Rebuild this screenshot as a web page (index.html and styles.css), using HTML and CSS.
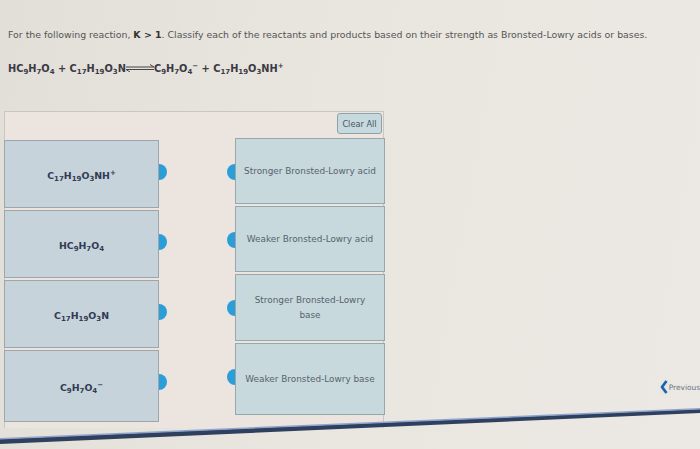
FILE: index.html
```html
<!DOCTYPE html>
<html>
<head>
<meta charset="utf-8">
<link rel="stylesheet" href="styles.css">
</head>
<body>
<div class="page">
  <p class="question">For the following reaction, <b>K &gt; 1</b>. Classify each of the reactants and products based on their strength as Bronsted-Lowry acids or bases.</p>
  <p class="equation">HC<sub>9</sub>H<sub>7</sub>O<sub>4</sub> + C<sub>17</sub>H<sub>19</sub>O<sub>3</sub>N<svg class="eq-arrow" width="30" height="8" viewBox="0 0 30 8"><path d="M1 3 H29 L25 0.5" fill="none" stroke="#444" stroke-width="1"/><path d="M29 5.5 H1 L5 8" fill="none" stroke="#444" stroke-width="1"/></svg>C<sub>9</sub>H<sub>7</sub>O<sub>4</sub><sup>&#8722;</sup> + C<sub>17</sub>H<sub>19</sub>O<sub>3</sub>NH<sup>+</sup></p>
  <div class="work">
    <div class="panel">
      <div class="toolbar"><button class="clear">Clear All</button></div>
      <div class="board">
        <div class="col left">
          <div class="item"><span>C<sub>17</sub>H<sub>19</sub>O<sub>3</sub>NH<sup>+</sup></span></div>
          <div class="item"><span>HC<sub>9</sub>H<sub>7</sub>O<sub>4</sub></span></div>
          <div class="item"><span>C<sub>17</sub>H<sub>19</sub>O<sub>3</sub>N</span></div>
          <div class="item"><span>C<sub>9</sub>H<sub>7</sub>O<sub>4</sub><sup>&#8722;</sup></span></div>
        </div>
        <div class="col right">
          <div class="target"><span>Stronger Bronsted-Lowry acid</span></div>
          <div class="target"><span>Weaker Bronsted-Lowry acid</span></div>
          <div class="target"><span>Stronger Bronsted-Lowry<br>base</span></div>
          <div class="target"><span>Weaker Bronsted-Lowry base</span></div>
        </div>
      </div>
    </div>
    <div class="nav">
      <a class="prev"><svg width="8" height="14" viewBox="0 0 8 14"><path d="M6.5 1 L2 7 L6.5 13" fill="none" stroke="#1f5fa8" stroke-width="2.6" stroke-linejoin="round"/></svg>Previous</a>
    </div>
  </div>
  <svg class="divider" width="700" height="40" viewBox="0 0 700 40"><polygon points="0,31 700,1 700,5 0,36" fill="#2f405f"/><polygon points="0,30 700,0 700,1.5 0,31.5" fill="#8ea4cc"/></svg>
</div>
</body>
</html>
```
FILE: styles.css
```css
html, body {
  margin: 0;
  padding: 0;
}
body {
  width: 700px;
  height: 449px;
  overflow: hidden;
  background: linear-gradient(100deg, #e2ded8 0%, #e9e5df 45%, #ece9e4 100%);
  font-family: "DejaVu Sans", Verdana, sans-serif;
}
.page {
  position: relative;
  height: 449px;
}
.question {
  margin: 0;
  padding: 29px 0 0 8px;
  font-size: 9.4px;
  line-height: 12px;
  color: #555;
  white-space: nowrap;
}
.question b {
  color: #333;
}
.equation {
  margin: 21px 0 0 8px;
  font-size: 9.8px;
  line-height: 14px;
  font-weight: bold;
  color: #3a3a44;
  white-space: nowrap;
}
sub {
  font-size: 7px;
  vertical-align: -2px;
  line-height: 0;
}
sup {
  font-size: 7px;
  vertical-align: 4px;
  line-height: 0;
}
.eq-arrow {
  vertical-align: 0px;
  margin: 0 -1px;
}
.work {
  display: flex;
  margin-top: 35px;
}
.panel {
  margin-left: 4px;
  width: 378px;
  height: 316px;
  border: 1px solid #cbc6c3;
  border-bottom: none;
  background: #ece4df;
}
.toolbar {
  display: flex;
  justify-content: flex-end;
  padding: 1px 1px 0 0;
}
.clear {
  width: 45px;
  height: 21px;
  padding: 0;
  border: 1px solid #8fa2aa;
  border-radius: 3px;
  background: #c6d9de;
  font-family: "DejaVu Sans", Verdana, sans-serif;
  font-size: 8.2px;
  color: #4a5560;
}
.board {
  display: grid;
  grid-template-columns: 154px 148px;
  justify-content: space-between;
  margin-top: 4px;
}
.col {
  display: flex;
  flex-direction: column;
  gap: 2px;
}
.left {
  padding-top: 2px;
  margin-left: -1px;
}
.right {
  margin-right: -2px;
}
.item, .target {
  position: relative;
  display: flex;
  align-items: center;
  justify-content: center;
  text-align: center;
  box-sizing: border-box;
}
.item {
  height: 68px;
  border: 1px solid #9ca6ab;
  background: #c6d3da;
  font-size: 9.4px;
  font-weight: bold;
  color: #323a55;
}
.item sub, .item sup {
  font-size: 7px;
}
.item:last-child {
  height: 72px;
}
.item span {
  padding-top: 3px;
}
.target {
  height: 66px;
  border: 1px solid #96a8ad;
  background: #c7d9dd;
  font-size: 8.9px;
  line-height: 15px;
  color: #58626c;
}
.target:nth-child(3) {
  height: 67px;
}
.target:last-child {
  height: 72px;
}
.item::after, .target::before {
  content: "";
  position: absolute;
  top: 23px;
  width: 8px;
  height: 16px;
  background: #2b9ed8;
}
.item::after {
  right: -9px;
  border-radius: 0 8px 8px 0;
}
.target::before {
  left: -9px;
  top: 25px;
  border-radius: 8px 0 0 8px;
}
.nav {
  flex: 1;
  display: flex;
  justify-content: flex-end;
  align-items: flex-end;
  padding-bottom: 34px;
}
.prev {
  display: flex;
  align-items: center;
  gap: 1px;
  margin-right: 0;
  font-size: 7.4px;
  color: #6a7280;
}
.prev svg {
  filter: drop-shadow(0 0 1.5px #b8dcf0);
}
.divider {
  position: absolute;
  left: 0;
  top: 408px;
}
```
